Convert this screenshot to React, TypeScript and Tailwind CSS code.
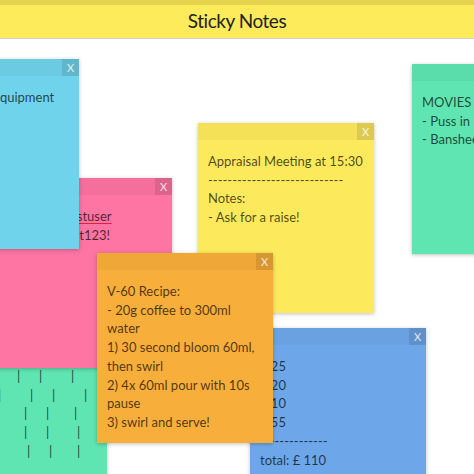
import React from "react";

type NoteProps = {
  className: string;
  children: React.ReactNode;
};

function Note({ className, children }: NoteProps) {
  return (
    <div className={`absolute h-[190px] shadow-[0_1px_4px_rgba(0,0,0,0.25)] ${className}`}>
      <div className="h-[17px] bg-black/[0.035] flex justify-end">
        <button className="w-[17px] h-[17px] bg-black/10 text-white/80 text-[11px] leading-[17px] text-center">
          X
        </button>
      </div>
      <div className="pl-[10px] pt-[12px] text-[13px] leading-[18.7px] text-black/70 whitespace-nowrap">
        {children}
      </div>
    </div>
  );
}

export default function App() {
  return (
    <div className="h-[474px] w-full overflow-hidden bg-white flex flex-col font-['Lato','Noto_Sans',sans-serif]">
      <header className="relative z-10 h-[39px] shrink-0 bg-[#fdeb5b] border-t-[5px] border-[#e5d24d] border-b border-b-[#d8ccc6] flex items-center justify-center">
        <h1 className="text-[19px] text-[#222] tracking-tight">Sticky Notes</h1>
      </header>

      <div className="relative flex-1">
        <Note className="w-[176px] left-[-69px] top-[299px] bg-[#5fe5b2]">
          <div className="h-[18.7px]">
            <span className="inline-block w-[4px] ml-[76px]">|</span>
            <span className="inline-block w-[4px] ml-[18px]">|</span>
            <span className="inline-block w-[4px] ml-[28px]">|</span>
          </div>
          <div className="h-[18.7px]">
            <span className="inline-block w-[4px] ml-[57px]">|</span>
            <span className="inline-block w-[4px] ml-[28px]">|</span>
            <span className="inline-block w-[4px] ml-[18px]">|</span>
            <span className="inline-block w-[4px] ml-[28px]">|</span>
          </div>
          <div className="h-[18.7px]">
            <span className="inline-block w-[4px] ml-[83px]">|</span>
            <span className="inline-block w-[4px] ml-[18px]">|</span>
            <span className="inline-block w-[4px] ml-[24px]">|</span>
          </div>
          <div className="h-[18.7px]">
            <span className="inline-block w-[4px] ml-[83px]">|</span>
            <span className="inline-block w-[4px] ml-[18px]">|</span>
            <span className="inline-block w-[4px] ml-[27px]">|</span>
          </div>
          <div className="h-[18.7px]">
            <span className="inline-block w-[4px] ml-[86px]">|</span>
            <span className="inline-block w-[4px] ml-[18px]">|</span>
            <span className="inline-block w-[4px] ml-[24px]">|</span>
          </div>
        </Note>

        <Note className="w-[181px] left-[-9px] top-[139px] bg-[#fe74a2]">
          <div>
            Username: <span className="underline decoration-[#e0203f] underline-offset-2">testuser</span>
          </div>
          <div>Password: test123!</div>
        </Note>

        <Note className="w-[176px] left-[-97px] top-[20px] bg-[#6fd3ec]">
          <div>Buy new gym equipment</div>
        </Note>

        <Note className="w-[176px] left-[198px] top-[84px] bg-[#fdea5c]">
          <div>Appraisal Meeting at 15:30</div>
          <div>----------------------------</div>
          <div>Notes:</div>
          <div>- Ask for a raise!</div>
        </Note>

        <Note className="w-[176px] left-[412px] top-[25px] bg-[#5fe5b2]">
          <div>MOVIES</div>
          <div>- Puss in Boots</div>
          <div>- Banshees of Inisherin</div>
        </Note>

        <Note className="w-[176px] left-[250px] top-[289px] bg-[#6ea7e9]">
          <div>£ 25</div>
          <div>£ 20</div>
          <div>£ 10</div>
          <div>£ 55</div>
          <div>--------------</div>
          <div>total: £ 110</div>
        </Note>

        <Note className="w-[176px] left-[97px] top-[214px] bg-[#f8ae3b]">
          <div>V-60 Recipe:</div>
          <div>- 20g coffee to 300ml</div>
          <div>water</div>
          <div>1) 30 second bloom 60ml,</div>
          <div>then swirl</div>
          <div>2) 4x 60ml pour with 10s</div>
          <div>pause</div>
          <div>3) swirl and serve!</div>
        </Note>
      </div>
    </div>
  );
}
